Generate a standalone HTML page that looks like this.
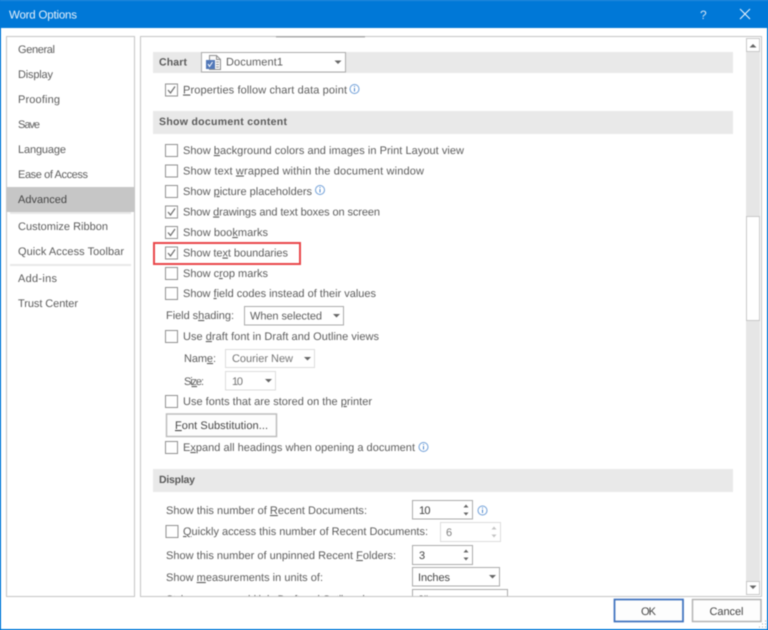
<!DOCTYPE html>
<html><head><meta charset="utf-8"><title>Word Options</title>
<style>
html,body{margin:0;padding:0;background:#0078d7;width:768px;height:630px;overflow:hidden}
svg{display:block;filter:blur(.4px)}
text{font-family:"Liberation Sans",sans-serif;font-size:11px;fill:#5c5c5c;text-rendering:geometricPrecision}
.b{font-weight:bold;font-size:10.5px;fill:#5a5a5a}
.d{fill:#444}
.cb{fill:#fff;stroke:#919191;stroke-width:1}
.ck{fill:none;stroke:#6e6e6e;stroke-width:1.2}
.dd{fill:#fff;stroke:#ababab;stroke-width:1}
.ld{fill:#fff;stroke:#dcdcdc;stroke-width:1}
.ar{fill:#666}
.ic{fill:#fff;stroke:#6f9fd8;stroke-width:1}
.it{fill:#4a86cf}
</style></head><body>
<svg width="768" height="630" viewBox="0 0 768 630" xmlns="http://www.w3.org/2000/svg">
<defs>
<clipPath id="pc"><rect x="141" y="37" width="605" height="559"/></clipPath>
<g id="i"><circle cx="0" cy="0" r="4.500" class="ic"/><rect x="-.5" y="-1" width="1" height="3.500" class="it"/><rect x="-.5" y="-3" width="1" height="1" class="it"/></g>
<g id="c"><rect x=".5" y=".5" width="12" height="12" class="cb"/></g>
<g id="k"><rect x=".5" y=".5" width="12" height="12" class="cb"/><path d="M3 6.500l2.500 3L10 3" class="ck"/></g>
</defs>

<rect x="0" y="0" width="768" height="630" fill="#0078d7"/>
<rect x="1" y="28" width="766" height="601" fill="#fff"/>
<rect x="0" y="0" width="768" height="1" fill="#2a8bdc"/>
<text x="9" y="18.500" style="font-size:11.500px;fill:#e6f1fb" textLength="68" lengthAdjust="spacing">Word Options</text>
<text x="700" y="19" style="font-size:12px;fill:#d5e7f7">?</text>
<path d="M740 9l10 10M750 9l-10 10" stroke="#eef6fd" stroke-width="1" fill="none"/>

<!-- left panel -->
<rect x="6.500" y="36.500" width="128" height="560" fill="#fff" stroke="#c4c4c4"/>
<rect x="7" y="187" width="127" height="25" fill="#c6c6c6"/>
<rect x="10" y="212" width="121" height="2" fill="#e8e8e8"/>
<rect x="10" y="264" width="121" height="2" fill="#e8e8e8"/>
<text x="18" y="53" textLength="37" lengthAdjust="spacing">General</text>
<text x="18" y="78" textLength="35" lengthAdjust="spacing">Display</text>
<text x="18" y="103" textLength="42" lengthAdjust="spacing">Proofing</text>
<text x="18" y="128" textLength="22" lengthAdjust="spacing">Save</text>
<text x="18" y="153" textLength="48" lengthAdjust="spacing">Language</text>
<text x="18" y="178" textLength="70" lengthAdjust="spacing">Ease of Access</text>
<text x="18" y="203" class="d" textLength="49" lengthAdjust="spacing">Advanced</text>
<text x="18" y="230" textLength="90" lengthAdjust="spacing">Customize Ribbon</text>
<text x="18" y="255" textLength="106" lengthAdjust="spacing">Quick Access Toolbar</text>
<text x="18" y="282" textLength="39" lengthAdjust="spacing">Add-ins</text>
<text x="18" y="307" textLength="60" lengthAdjust="spacing">Trust Center</text>

<!-- right panel -->
<rect x="140.500" y="36.500" width="621" height="560" fill="#fff" stroke="#c4c4c4"/>
<rect x="276" y="36" width="89" height="1.500" fill="#a8a8a8"/>
<!-- scrollbar -->
<rect x="746" y="38" width="14" height="557" fill="#e6e6e6"/>
<rect x="746.500" y="38.500" width="13" height="13" fill="#fff" stroke="#c8c8c8"/>
<path d="M749.500 47.500h7l-3.500-3.500z" class="ar"/>
<rect x="746.500" y="216.500" width="13" height="104" fill="#fff" stroke="#c8c8c8"/>
<rect x="746.500" y="581.500" width="13" height="13" fill="#fff" stroke="#c8c8c8"/>
<path d="M749.500 585.500h7l-3.500 3.500z" class="ar"/>

<g clip-path="url(#pc)">
<rect x="153" y="52" width="580" height="21" fill="#e9e9e9"/>
<rect x="153" y="111" width="580" height="23" fill="#e9e9e9"/>
<rect x="153" y="469" width="580" height="23" fill="#e9e9e9"/>
<text x="159" y="65.500" class="b" textLength="28" lengthAdjust="spacing">Chart</text>
<text x="159" y="125" class="b" textLength="128" lengthAdjust="spacing">Show document content</text>
<text x="159" y="483" class="b" textLength="36" lengthAdjust="spacing">Display</text>

<!-- chart dropdown -->
<rect x="201.500" y="52.500" width="144" height="19.500" class="dd"/>
<path d="M209.500 55.500h7l4 4v10h-11z" fill="#fafafa" stroke="#8f8f8f"/>
<path d="M216.500 55.500v4h4" fill="none" stroke="#8f8f8f"/>
<path d="M216 62h3M216 64.500h3M216 67h3" stroke="#9a9a9a" fill="none"/>
<rect x="206" y="60" width="9" height="9" fill="#5278b8"/>
<path d="M208 64l1.500 2.500 3-4.500" stroke="#fff" fill="none"/>
<text x="226" y="65.500" textLength="57" lengthAdjust="spacing">Document1</text>
<path d="M334.500 60.500h7l-3.500 3.500z" class="ar"/>

<!-- checks -->
<use href="#k" x="165" y="83.500"/>
<text x="183" y="93.500" textLength="164" lengthAdjust="spacing"><tspan text-decoration="underline">P</tspan>roperties follow chart data point</text>
<use href="#i" x="354.500" y="89"/>

<use href="#c" x="165" y="144"/>
<text x="183" y="154" textLength="281" lengthAdjust="spacing">Show <tspan text-decoration="underline">b</tspan>ackground colors and images in Print Layout view</text>
<use href="#c" x="165" y="164.500"/>
<text x="183" y="174.500" textLength="241" lengthAdjust="spacing">Show text <tspan text-decoration="underline">w</tspan>rapped within the document window</text>
<use href="#c" x="165" y="185"/>
<text x="183" y="195" textLength="129" lengthAdjust="spacing">Show <tspan text-decoration="underline">p</tspan>icture placeholders</text>
<use href="#i" x="320" y="190"/>
<use href="#k" x="165" y="205.500"/>
<text x="183" y="215.500" textLength="197" lengthAdjust="spacing">Show <tspan text-decoration="underline">d</tspan>rawings and text boxes on screen</text>
<use href="#k" x="165" y="226"/>
<text x="183" y="236" textLength="85" lengthAdjust="spacing">Show boo<tspan text-decoration="underline">k</tspan>marks</text>
<use href="#k" x="165" y="246.500"/>
<text x="183" y="256.500" textLength="105" lengthAdjust="spacing">Show te<tspan text-decoration="underline">x</tspan>t boundaries</text>
<use href="#c" x="165" y="267"/>
<text x="183" y="277" textLength="85" lengthAdjust="spacing">Show c<tspan text-decoration="underline">r</tspan>op marks</text>
<use href="#c" x="165" y="287"/>
<text x="183" y="297" textLength="193" lengthAdjust="spacing">Show <tspan text-decoration="underline">f</tspan>ield codes instead of their values</text>

<text x="166" y="319" textLength="68" lengthAdjust="spacing">Field s<tspan text-decoration="underline">h</tspan>ading:</text>
<rect x="244.500" y="306.500" width="99" height="18.500" class="dd"/>
<text x="250" y="319.500" textLength="72" lengthAdjust="spacing">When selected</text>
<path d="M333 314h7l-3.500 3.500z" class="ar"/>

<use href="#c" x="165" y="330"/>
<text x="183" y="340" textLength="196" lengthAdjust="spacing">Use <tspan text-decoration="underline">d</tspan>raft font in Draft and Outline views</text>

<text x="184" y="362" textLength="32" lengthAdjust="spacing">Nam<tspan text-decoration="underline">e</tspan>:</text>
<rect x="225.500" y="349.500" width="89" height="18" class="ld"/>
<text x="232" y="362" fill-opacity=".85" textLength="61" lengthAdjust="spacing">Courier New</text>
<path d="M304 357h7l-3.500 3.500z" class="ar"/>
<text x="184" y="385" textLength="20" lengthAdjust="spacing">Si<tspan text-decoration="underline">z</tspan>e:</text>
<rect x="225.500" y="371.500" width="50" height="18.500" class="ld"/>
<text x="232" y="385" fill-opacity=".85" textLength="11" lengthAdjust="spacing">10</text>
<path d="M265 379h7l-3.500 3.500z" class="ar"/>

<use href="#c" x="165" y="395"/>
<text x="183" y="405" textLength="189" lengthAdjust="spacing">Use fonts that are stored on the <tspan text-decoration="underline">p</tspan>rinter</text>

<rect x="166.500" y="414" width="110" height="22.500" fill="#fdfdfd" stroke="#bdbdbd" stroke-width="1.500"/>
<text x="175" y="429" class="d" textLength="93" lengthAdjust="spacing"><tspan text-decoration="underline">F</tspan>ont Substitution...</text>

<use href="#c" x="165" y="441"/>
<text x="183" y="451" textLength="232" lengthAdjust="spacing">E<tspan text-decoration="underline">x</tspan>pand all headings when opening a document</text>
<use href="#i" x="423.500" y="447"/>

<!-- display -->
<text x="166" y="514" textLength="201" lengthAdjust="spacing">Show this number of <tspan text-decoration="underline">R</tspan>ecent Documents:</text>
<rect x="412.500" y="500.500" width="60" height="18.500" class="dd"/>
<text x="419" y="514" class="d" textLength="11.500" lengthAdjust="spacing">10</text>
<path d="M463.500 507.500h5l-2.500-3zM463.500 512.500h5l-2.500 3z" class="ar"/>
<use href="#i" x="482.500" y="510.500"/>

<use href="#c" x="165.500" y="525"/>
<text x="183" y="535" textLength="245" lengthAdjust="spacing"><tspan text-decoration="underline">Q</tspan>uickly access this number of Recent Documents:</text>
<rect x="440.500" y="522.500" width="60" height="19" class="ld"/>
<text x="446" y="536" fill-opacity=".8">6</text>
<path d="M491.500 529.500h5l-2.500-3zM491.500 534.500h5l-2.500 3z" fill="#c4c4c4"/>

<text x="166" y="559" textLength="230" lengthAdjust="spacing">Show this number of unpinned Recent <tspan text-decoration="underline">F</tspan>olders:</text>
<rect x="412.500" y="545.500" width="60" height="19" class="dd"/>
<text x="419" y="559" class="d">3</text>
<path d="M463.500 552.500h5l-2.500-3zM463.500 557.500h5l-2.500 3z" class="ar"/>

<text x="166" y="581" textLength="157" lengthAdjust="spacing">Show <tspan text-decoration="underline">m</tspan>easurements in units of:</text>
<rect x="412.500" y="567.500" width="87" height="18.500" class="dd"/>
<text x="418" y="581" class="d" textLength="32" lengthAdjust="spacing">Inches</text>
<path d="M489 575h7l-3.500 3.500z" class="ar"/>

<text x="166" y="603" textLength="220" lengthAdjust="spacing">Style area pane width in Draft and Outline views:</text>
<rect x="412.500" y="589.500" width="95" height="19" class="dd"/>
<text x="418" y="603">0"</text>
</g>

<!-- footer -->
<rect x="614.500" y="599.500" width="68.500" height="22" fill="#fdfdfd" stroke="#3a6fbd" stroke-width="1.700"/>
<text x="641" y="615" class="d" textLength="15" lengthAdjust="spacing">OK</text>
<rect x="692.500" y="599.500" width="68.500" height="22" fill="#fdfdfd" stroke="#b4b4b4" stroke-width="1.500"/>
<text x="709.500" y="615" class="d" textLength="34" lengthAdjust="spacing">Cancel</text>

<!-- red highlight -->
<rect x="154" y="243" width="146" height="21" fill="none" stroke="#e9474a" stroke-width="2"/>

<!-- grip -->
<path d="M765 627h1M762 627h1M759 627h1M765 624h1M762 624h1M765 621h1" stroke="#a8a8a8" fill="none"/>
</svg>
</body></html>
